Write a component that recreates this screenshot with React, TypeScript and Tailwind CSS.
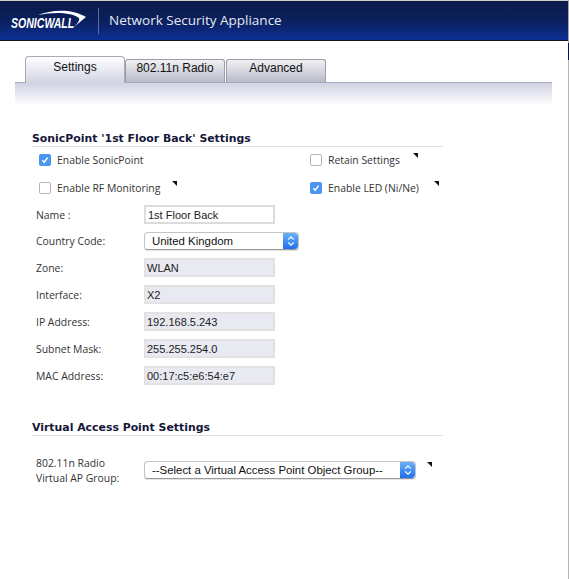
const sans = "font-['Open_Sans',sans-serif]";

function Flag({ className }: { className: string }) {
  // little black corner mark beside a field
  return (
    <svg width="5" height="5" viewBox="0 0 5 5" className={`absolute ${className}`}>
      <path d="M0 0H5V5Z" fill="#111" />
    </svg>
  );
}

function Check({ on, label, flag }: { on?: boolean; label: string; flag: string }) {
  return (
    <div className="relative flex h-3 items-center gap-[6px]">
      {on ? (
        <div className="flex h-3 w-3 items-center justify-center rounded-[2px] bg-[#4a94f2]">
          <svg width="8" height="8" viewBox="0 0 8 8" fill="none">
            <path d="M1.4 4.2 3.2 6.2 6.6 1.6" stroke="#fff" strokeWidth="1.5" />
          </svg>
        </div>
      ) : (
        <div className="h-3 w-3 rounded-[2px] border border-[#b4b4b4] bg-white" />
      )}
      <span className={`${sans} text-[10.4px] leading-3 text-[#333]`}>{label}</span>
      <Flag className={flag} />
    </div>
  );
}

function Stepper() {
  return (
    <div className="flex w-[15px] items-center justify-center rounded-r-[4px] bg-gradient-to-b from-[#6cb0fb] to-[#1a6fe8]">
      <svg width="8" height="12" viewBox="0 0 8 12" fill="none" stroke="#fff" strokeWidth="1.3">
        <path d="M1.2 4.6 4 1.8 6.8 4.6" />
        <path d="M1.2 7.4 4 10.2 6.8 7.4" />
      </svg>
    </div>
  );
}

function Select({ value, width }: { value: string; width: string }) {
  return (
    <div className={`flex h-[18px] ${width} rounded-[4px] border border-[#c4c4c4] border-b-[#9a9a9a] bg-white shadow-[0_1px_1px_rgba(0,0,0,0.12)]`}>
      <div className="flex-1 pl-[7px] font-['Liberation_Sans',sans-serif] text-[11.4px] leading-[16px] text-[#111]">{value}</div>
      <Stepper />
    </div>
  );
}

function Row({ label, children }: { label: string; children: React.ReactNode }) {
  return (
    <div className="flex items-center">
      <div className={`${sans} w-[112px] pl-1 pt-[2px] text-[10.4px] text-[#333]`}>{label}</div>
      {children}
    </div>
  );
}

function Field({ value, readOnly }: { value: string; readOnly?: boolean }) {
  return (
    <div
      className={`h-[19px] w-[131px] border-2 pt-px font-['Liberation_Sans',sans-serif] text-[11px] leading-[14px] text-[#222] ${
        readOnly ? 'border-[#e2e2e2] bg-[#e8e9f1] pl-[1px]' : 'border-[#dcdcdc] bg-white pl-[2px]'
      }`}
    >
      {value}
    </div>
  );
}

function Heading({ children }: { children: string }) {
  return (
    <div className="border-b border-[#dfdfdf] pt-px font-['DejaVu_Sans',sans-serif] text-[10.9px] font-bold leading-[14px] text-[#14163a]">
      {children}
    </div>
  );
}

function Tab({ label, active }: { label: string; active?: boolean }) {
  return active ? (
    <div className="-mb-px flex h-[27px] w-[100px] justify-center rounded-t-[4px] border border-b-0 border-[#a9a9b8] bg-gradient-to-b from-white to-[#d2d4e4] pt-[2px] font-['Liberation_Sans',sans-serif] text-[12px] leading-4 text-[#111]">
      {label}
    </div>
  ) : (
    <div className="flex h-[23px] w-[100px] justify-center rounded-t-[3px] border border-b-0 border-[#9c9ca8] bg-gradient-to-b from-[#f2f2f2] to-[#b9bbcd] font-['Liberation_Sans',sans-serif] text-[12px] leading-4 text-[#111]">
      {label}
    </div>
  );
}

export default function App() {
  return (
    <div className="flex h-[579px] w-[569px] overflow-hidden bg-white">
      <div className="w-[568px]">
        {/* top bar */}
        <div className="h-px bg-[#d0d0cc]" />
        <div className="flex h-[39px] items-center bg-gradient-to-b from-[#0a1a4a] via-[#0a1f5c] to-[#0c2f96] pl-[11px]">
          <div className="relative h-[28px] w-[87px]">
            <svg width="87" height="28" viewBox="0 0 87 28" className="absolute left-0 top-0">
              <path d="M27 8C40 3 60 1 75 10L63 20C67 16 69 13 68 11C60 5 42 5 27 8Z" fill="#fff" />
            </svg>
            <span className="absolute left-0 top-[8px] origin-left scale-x-[0.68] whitespace-nowrap font-['Liberation_Sans',sans-serif] text-[15.5px] font-bold italic leading-[15px] text-white">
              SONICWALL
            </span>
          </div>
          <div className="h-[26px] w-px bg-[#5c6e9e]" />
          <div className={`${sans} pl-[10px] text-[13.5px] text-[#e6e9f2]`}>Network Security Appliance</div>
        </div>
        <div className="h-px bg-[#14141e]" />

        {/* tabs */}
        <div className="flex pl-[25px] pt-[15px]">
          <Tab label="Settings" active />
          <div className="flex items-end gap-px pt-[3px]">
            <Tab label="802.11n Radio" />
            <Tab label="Advanced" />
          </div>
        </div>
        <div className="ml-[15px] h-[23px] w-[537px] border-t border-[#a9a9bd] bg-gradient-to-b from-[#d0d3e3] to-white" />

        <div className="pl-[32px] pt-[26px]">
          <div className="w-[411px]">
            <Heading>SonicPoint '1st Floor Back' Settings</Heading>
          </div>

          <div className="grid w-[411px] grid-cols-[271px_1fr] gap-y-[16px] pl-[7px] pt-[7px]">
            <Check on label="Enable SonicPoint" flag="hidden" />
            <Check label="Retain Settings" flag="left-[103px] top-[-1px]" />
            <Check label="Enable RF Monitoring" flag="left-[133px] top-[-1px]" />
            <Check on label="Enable LED (Ni/Ne)" flag="left-[124px] top-[-1px]" />
          </div>

          <div className="flex flex-col gap-2 pt-[11px]">
            <Row label="Name :"><Field value="1st Floor Back" /></Row>
            <Row label="Country Code:"><Select value="United Kingdom" width="w-[155px]" /></Row>
            <Row label="Zone:"><Field value="WLAN" readOnly /></Row>
            <Row label="Interface:"><Field value="X2" readOnly /></Row>
            <Row label="IP Address:"><Field value="192.168.5.243" readOnly /></Row>
            <Row label="Subnet Mask:"><Field value="255.255.254.0" readOnly /></Row>
            <Row label="MAC Address:"><Field value="00:17:c5:e6:54:e7" readOnly /></Row>
          </div>

          <div className="w-[411px] pt-[35px]">
            <Heading>Virtual Access Point Settings</Heading>
          </div>

          <div className="relative flex items-center pt-[19px]">
            <div className={`${sans} h-[30px] w-[112px] pl-1 pt-px text-[10.4px] leading-[15px] text-[#333]`}>
              802.11n Radio
              <br />
              Virtual AP Group:
            </div>
            <Select value="--Select a Virtual Access Point Object Group--" width="w-[272px]" />
            <Flag className="left-[395px] top-[26px]" />
          </div>
        </div>
      </div>

      {/* window edge */}
      <div className="flex w-px flex-col">
        <div className="h-[43px] bg-[#a8a8a8]" />
        <div className="h-[17px] bg-[#0a1440]" />
        <div className="flex-1 bg-[#b4b4b4]" />
      </div>
    </div>
  );
}
